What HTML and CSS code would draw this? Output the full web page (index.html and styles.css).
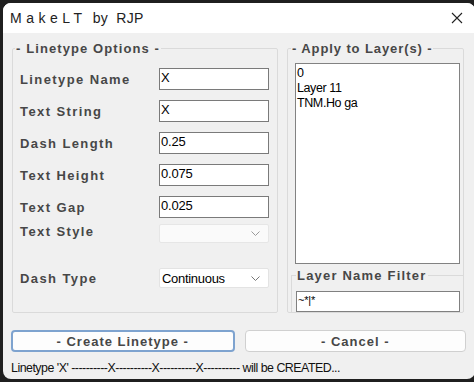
FILE: index.html
```html
<!DOCTYPE html>
<html>
<head>
<meta charset="utf-8">
<link rel="stylesheet" href="styles.css">
</head>
<body>
<div class="window">
  <div class="titlebar">
    <div class="title"><span class="spaced">MakeLT</span> by <span class="rjp">RJP</span></div>
    <svg class="close" width="12" height="12" viewBox="0 0 12 12"><path d="M1 1 L11 11 M11 1 L1 11" stroke="#222" stroke-width="1.1" fill="none"/></svg>
  </div>
  <div class="content">
    <div class="groups">
      <fieldset class="group left">
        <legend>- Linetype Options -</legend>
        <div class="row"><label>Linetype Name</label><div class="input">X</div></div>
        <div class="row"><label>Text String</label><div class="input">X</div></div>
        <div class="row"><label>Dash Length</label><div class="input">0.25</div></div>
        <div class="row"><label>Text Height</label><div class="input">0.075</div></div>
        <div class="row"><label>Text Gap</label><div class="input">0.025</div></div>
        <div class="row style-row"><label>Text Style</label><div class="combo disabled"><span></span><svg class="chev" width="9" height="5" viewBox="0 0 9 5"><path d="M0.5 0.5 L4.5 4.5 L8.5 0.5" stroke="#9a9a9a" fill="none"/></svg></div></div>
        <div class="row dash-row"><label>Dash Type</label><div class="combo"><span>Continuous</span><svg class="chev" width="9" height="5" viewBox="0 0 9 5"><path d="M0.5 0.5 L4.5 4.5 L8.5 0.5" stroke="#777" fill="none"/></svg></div></div>
      </fieldset>
      <fieldset class="group right">
        <legend>- Apply to Layer(s) -</legend>
        <div class="listbox">
          <div class="item">0</div>
          <div class="item">Layer 11</div>
          <div class="item">TNM.Ho ga</div>
        </div>
        <fieldset class="subgroup">
          <legend>Layer Name Filter</legend>
          <div class="input filter">~*|*</div>
        </fieldset>
      </fieldset>
    </div>
    <div class="buttons">
      <div class="btn primary">- Create Linetype -</div>
      <div class="btn">- Cancel -</div>
    </div>
    <div class="status">Linetype 'X' ----------X----------X----------X---------- will be CREATED...</div>
  </div>
</div>
</body>
</html>
```
FILE: styles.css
```css
html, body {
  margin: 0;
  padding: 0;
  background: #1f1f1f;
  width: 474px;
  height: 382px;
  overflow: hidden;
}
.window {
  margin: 3px 0 0 3px;
  width: 472px;
  height: 376px;
  border-radius: 8px;
  overflow: hidden;
  background: #f0f0f0;
  display: flex;
  flex-direction: column;
  font-family: "Liberation Sans", Arial, sans-serif;
}
.titlebar {
  height: 30px;
  background: #ffffff;
  display: flex;
  align-items: center;
  justify-content: space-between;
  padding: 0 12px 0 7px;
  flex: none;
}
.title {
  font-size: 14px;
  color: #222;
  letter-spacing: 0.3px;
}
.title .spaced {
  letter-spacing: 4.5px;
  margin-right: 2px;
}
.title .rjp {
  margin-left: 4px;
}
.close {
  display: block;
}
.content {
  flex: 1;
  padding: 8px 8px 0 9px;
  display: flex;
  flex-direction: column;
}
.groups {
  display: flex;
  gap: 9px;
}
.group {
  margin: 0;
  border: 1px solid #dadada;
  border-radius: 2px;
  min-width: 0;
}
.group legend, .subgroup legend {
  font-size: 13px;
  line-height: 15px;
  font-weight: bold;
  letter-spacing: 1.1px;
  color: #474747;
  padding: 0 1px;
  margin-left: -5px;
}
.group.left {
  width: 266px;
  box-sizing: border-box;
  padding: 12px 8px 24px 7px;
}
.row {
  display: flex;
  align-items: center;
  justify-content: space-between;
  height: 22px;
  margin-bottom: 10px;
}
.row label {
  font-size: 13px;
  font-weight: bold;
  letter-spacing: 1.4px;
  color: #474747;
}
.input {
  width: 110px;
  height: 22px;
  box-sizing: border-box;
  border: 1px solid #7a7a7a;
  background: #fff;
  font-size: 13px;
  line-height: 18px;
  padding-left: 1px;
  color: #000;
  letter-spacing: -0.2px;
}
.row.style-row {
  margin-top: -4px;
  margin-bottom: 0;
  height: 19px;
  align-items: flex-start;
}
.row.style-row label {
  line-height: 15px;
}
.combo {
  width: 110px;
  height: 19px;
  box-sizing: border-box;
  border: 1px solid #e3e3e3;
  background: #fff;
  display: flex;
  align-items: center;
  justify-content: space-between;
  padding: 0 8px 0 2px;
  font-size: 13px;
  color: #000;
  letter-spacing: -0.3px;
  border-radius: 2px;
}
.combo.disabled {
  background: #fafafa;
  border-color: #e6e6e6;
}
.row.dash-row {
  margin-top: 25px;
  margin-bottom: 0;
  height: 20px;
}
.row.dash-row .combo {
  height: 20px;
}
.group.right {
  flex: 1;
  padding: 7px 3px 0 7px;
  margin-right: 3px;
}
.group.right > legend {
  margin-left: -4px;
  letter-spacing: 0.9px;
}
.listbox {
  height: 201px;
  box-sizing: border-box;
  border: 1px solid #828282;
  background: #fff;
  padding: 2px 0 0 1px;
}
.item {
  font-size: 12.5px;
  line-height: 15px;
  color: #000;
  letter-spacing: -0.4px;
}
.subgroup {
  margin: 4px -4px 0 -4px;
  border: 1px solid #dadada;
  border-bottom: none;
  padding: 8px 3px 0 4px;
  min-width: 0;
}
.subgroup legend {
  margin-left: 0;
  letter-spacing: 1.2px;
}
.input.filter {
  width: auto;
  height: 21px;
  font-size: 11px;
  line-height: 16px;
  border-color: #808080;
}
.buttons {
  display: flex;
  gap: 10px;
  margin-top: 17px;
  margin-left: -1px;
  margin-right: 1px;
}
.btn {
  flex: 1;
  height: 22px;
  box-sizing: border-box;
  border: 1px solid #d0d0d0;
  border-radius: 4px;
  background: #fdfdfd;
  font-size: 13px;
  font-weight: bold;
  letter-spacing: 1px;
  color: #474747;
  display: flex;
  align-items: center;
  justify-content: center;
}
.btn.primary {
  border: 2px solid #7ea3cf;
}
.status {
  margin-top: 9px;
  margin-left: -1px;
  font-size: 12.4px;
  color: #111;
  letter-spacing: -0.5px;
  white-space: nowrap;
}
```
